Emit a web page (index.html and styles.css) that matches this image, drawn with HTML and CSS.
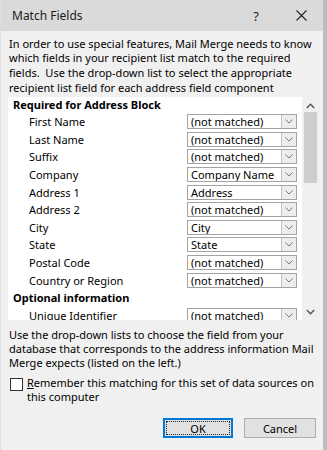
FILE: index.html
```html
<!DOCTYPE html>
<html>
<head>
<meta charset="utf-8">
<link rel="stylesheet" href="styles.css">
</head>
<body>
<div class="window">
  <div class="titlebar">
    <span class="title">Match Fields</span>
    <span class="help">?</span>
    <span class="close"><svg width="11" height="11" viewBox="0 0 11 11"><path d="M0.5 0.5 L10.5 10.5 M10.5 0.5 L0.5 10.5" stroke="#222" stroke-width="1.1" fill="none"/></svg></span>
  </div>
  <div class="content">
    <p class="intro">In order to use special features, Mail Merge needs to know which fields in your recipient list match to the required fields.&nbsp; Use the drop-down list to select the appropriate recipient list field for each address field component</p>
    <div class="listwrap">
      <div class="list">
        <div class="group">Required for Address Block</div>
        <div class="row"><span class="label">First Name</span><div class="combo"><span class="value">(not matched)</span><span class="btn"><svg width="8" height="5" viewBox="0 0 8 5"><path d="M0.5 0.5 L4 4 L7.5 0.5" stroke="#7a7a7a" fill="none"/></svg></span></div></div>
        <div class="row"><span class="label">Last Name</span><div class="combo"><span class="value">(not matched)</span><span class="btn"><svg width="8" height="5" viewBox="0 0 8 5"><path d="M0.5 0.5 L4 4 L7.5 0.5" stroke="#7a7a7a" fill="none"/></svg></span></div></div>
        <div class="row"><span class="label">Suffix</span><div class="combo"><span class="value">(not matched)</span><span class="btn"><svg width="8" height="5" viewBox="0 0 8 5"><path d="M0.5 0.5 L4 4 L7.5 0.5" stroke="#7a7a7a" fill="none"/></svg></span></div></div>
        <div class="row"><span class="label">Company</span><div class="combo"><span class="value">Company Name</span><span class="btn"><svg width="8" height="5" viewBox="0 0 8 5"><path d="M0.5 0.5 L4 4 L7.5 0.5" stroke="#7a7a7a" fill="none"/></svg></span></div></div>
        <div class="row"><span class="label">Address 1</span><div class="combo"><span class="value">Address</span><span class="btn"><svg width="8" height="5" viewBox="0 0 8 5"><path d="M0.5 0.5 L4 4 L7.5 0.5" stroke="#7a7a7a" fill="none"/></svg></span></div></div>
        <div class="row"><span class="label">Address 2</span><div class="combo"><span class="value">(not matched)</span><span class="btn"><svg width="8" height="5" viewBox="0 0 8 5"><path d="M0.5 0.5 L4 4 L7.5 0.5" stroke="#7a7a7a" fill="none"/></svg></span></div></div>
        <div class="row"><span class="label">City</span><div class="combo"><span class="value">City</span><span class="btn"><svg width="8" height="5" viewBox="0 0 8 5"><path d="M0.5 0.5 L4 4 L7.5 0.5" stroke="#7a7a7a" fill="none"/></svg></span></div></div>
        <div class="row"><span class="label">State</span><div class="combo"><span class="value">State</span><span class="btn"><svg width="8" height="5" viewBox="0 0 8 5"><path d="M0.5 0.5 L4 4 L7.5 0.5" stroke="#7a7a7a" fill="none"/></svg></span></div></div>
        <div class="row"><span class="label">Postal Code</span><div class="combo"><span class="value">(not matched)</span><span class="btn"><svg width="8" height="5" viewBox="0 0 8 5"><path d="M0.5 0.5 L4 4 L7.5 0.5" stroke="#7a7a7a" fill="none"/></svg></span></div></div>
        <div class="row"><span class="label">Country or Region</span><div class="combo"><span class="value">(not matched)</span><span class="btn"><svg width="8" height="5" viewBox="0 0 8 5"><path d="M0.5 0.5 L4 4 L7.5 0.5" stroke="#7a7a7a" fill="none"/></svg></span></div></div>
        <div class="group">Optional information</div>
        <div class="row"><span class="label">Unique Identifier</span><div class="combo"><span class="value">(not matched)</span><span class="btn"><svg width="8" height="5" viewBox="0 0 8 5"><path d="M0.5 0.5 L4 4 L7.5 0.5" stroke="#7a7a7a" fill="none"/></svg></span></div></div>
      </div>
      <div class="scrollbar">
        <span class="arrow"><svg width="9" height="6" viewBox="0 0 9 6"><path d="M0.8 5 L4.5 1.3 L8.2 5" stroke="#555" stroke-width="1.5" fill="none"/></svg></span>
        <div class="thumb"></div>
        <span class="spacer"></span>
        <span class="arrow"><svg width="9" height="6" viewBox="0 0 9 6"><path d="M0.8 1 L4.5 4.7 L8.2 1" stroke="#555" stroke-width="1.5" fill="none"/></svg></span>
      </div>
    </div>
    <p class="hint">Use the drop-down lists to choose the field from your database that corresponds to the address information Mail Merge expects (listed on the left.)</p>
    <div class="check"><span class="box"></span><span class="checktext"><u>R</u>emember this matching for this set of data sources on this computer</span></div>
    <div class="buttons">
      <button class="ok"><span class="focus">OK</span></button>
      <button class="cancel">Cancel</button>
    </div>
  </div>
</div>
</body>
</html>
```
FILE: styles.css
```css
html, body {
  margin: 0;
  padding: 0;
}
body {
  background: #bdbdbd;
  width: 327px;
  height: 450px;
  overflow: hidden;
}
.window {
  width: 323px;
  height: 450px;
  background: #f0f0f0;
  font-family: "Noto Sans", "DejaVu Sans", sans-serif;
  font-size: 11px;
  color: #000;
  box-sizing: border-box;
  border-left: 1px solid #dedede;
}
.titlebar {
  height: 31px;
  background: #dadada;
  display: flex;
  align-items: center;
}
.title {
  flex: 1;
  padding-left: 11px;
  font-size: 12px;
  color: #1a1a1a;
}
.help {
  width: 46px;
  text-align: center;
  font-size: 13px;
  color: #222;
}
.close {
  width: 44px;
  display: flex;
  justify-content: center;
}
.content {
  padding-left: 7px;
}
.intro {
  margin: 5.6px 0 0 1px;
  line-height: 14.7px;
  width: 310px;
}
.listwrap {
  display: flex;
  margin-top: 1.6px;
  height: 223px;
}
.list {
  width: 294px;
  background: #fff;
  overflow: hidden;
}
.group {
  height: 16px;
  line-height: 16px;
  padding-left: 5px;
  font-weight: bold;
}
.list .row + .group {
  height: 17.6px;
  line-height: 17.6px;
}
.row {
  height: 17.6px;
  display: flex;
  align-items: center;
}
.label {
  width: 158px;
  padding-left: 21px;
}
.combo {
  width: 110px;
  height: 15px;
  box-sizing: border-box;
  border: 1px solid #a3a3a3;
  display: flex;
  background: #fff;
}
.value {
  flex: 1;
  padding-left: 3px;
  line-height: 13px;
  white-space: nowrap;
  overflow: hidden;
}
.btn {
  width: 14px;
  background: #ededed;
  border-left: 1px solid #c4c4c4;
  display: flex;
  align-items: center;
  justify-content: center;
}
.scrollbar {
  width: 17px;
  display: flex;
  flex-direction: column;
  align-items: center;
}
.arrow {
  height: 17px;
  display: flex;
  align-items: center;
  justify-content: center;
}
.thumb {
  width: 13px;
  height: 71px;
  background: #cdcdcd;
  margin-top: -2px;
}
.spacer {
  flex: 1;
}
.hint {
  margin: 8px 0 0 1px;
  line-height: 14px;
  width: 310px;
}
.check {
  display: flex;
  align-items: flex-start;
  margin-top: 6px;
  line-height: 13.5px;
}
.box {
  width: 13px;
  height: 13px;
  box-sizing: border-box;
  border: 1px solid #333;
  background: #fff;
  margin: 1.5px 0 0 2px;
  flex: none;
}
.checktext {
  padding-left: 4px;
  width: 290px;
}
.buttons {
  display: flex;
  justify-content: flex-end;
  gap: 11px;
  padding-right: 7px;
  margin-top: 15px;
}
button {
  font-family: inherit;
  font-size: 11px;
  color: #000;
  height: 20px;
  padding: 0;
  box-sizing: border-box;
  background: #e1e1e1;
  border: 1px solid #adadad;
}
.ok {
  width: 70px;
  border: 2px solid #0078d7;
  display: flex;
  padding: 1px;
}
.focus {
  flex: 1;
  border: 1px dotted #222;
  display: flex;
  align-items: center;
  justify-content: center;
}
.cancel {
  width: 72px;
}
```
